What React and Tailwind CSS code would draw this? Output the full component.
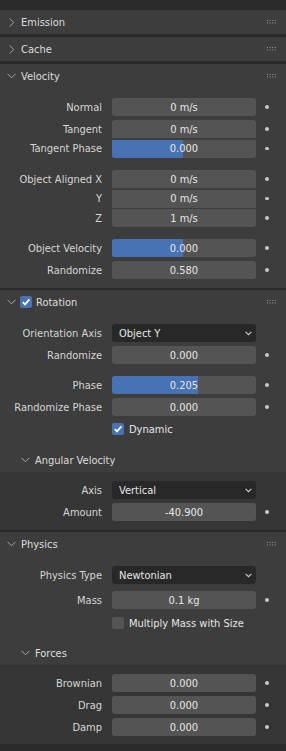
import React from "react";

const FONT = { fontFamily: '"DejaVu Sans Condensed", "DejaVu Sans", sans-serif' };

function Chevron({ open, className = "" }) {
  return open ? (
    <svg width="9" height="6" viewBox="0 0 9 6" className={className}>
      <polyline points="0.5,0.8 4.5,4.8 8.5,0.8" fill="none" stroke="#a8a8a8" strokeWidth="1" />
    </svg>
  ) : (
    <svg width="6" height="9" viewBox="0 0 6 9" className={className}>
      <polyline points="0.8,0.5 4.8,4.5 0.8,8.5" fill="none" stroke="#a8a8a8" strokeWidth="1" />
    </svg>
  );
}

function Grip() {
  const dots = [];
  for (let r = 0; r < 2; r++)
    for (let c = 0; c < 4; c++)
      dots.push(<rect key={r + "-" + c} x={c * 2.6} y={r * 2.4} width="1" height="1" fill="#9a9a9a" />);
  return (
    <svg width="10" height="4" viewBox="0 0 10 4" className="absolute right-[9px] top-1/2 -translate-y-1/2">
      {dots}
    </svg>
  );
}

function Check({ on, className = "" }) {
  return (
    <div
      className={
        "w-[12px] h-[12px] rounded-[2px] flex items-center justify-center " +
        (on ? "bg-[#4772b3]" : "bg-[#545454]") +
        " " +
        className
      }
    >
      {on && (
        <svg width="10" height="10" viewBox="0 0 10 10">
          <polyline points="1.8,5.2 4,7.4 8.4,2.4" fill="none" stroke="#ffffff" strokeWidth="1.7" />
        </svg>
      )}
    </div>
  );
}

function Header({ title, open, checkbox, className = "" }) {
  return (
    <div className={"relative h-[24px] bg-[#3d3d3d] flex items-center text-[#dedede] " + className}>
      <div className="w-[21px] flex justify-center pl-[2px]">
        <Chevron open={open} />
      </div>
      {checkbox && <Check on className="-ml-[1px] mr-[4px]" />}
      <span className="text-[11px] leading-none pt-[1px]">{title}</span>
      <Grip />
    </div>
  );
}

function SubHeader({ title }) {
  return (
    <div className="h-[24px] flex items-center text-[#dedede]">
      <div className="w-[35px] flex justify-end pr-[5px]">
        <Chevron open />
      </div>
      <span className="text-[11px] leading-none pt-[1px]">{title}</span>
    </div>
  );
}

function Dot() {
  return <div className="w-[3.5px] h-[3.5px] rounded-full bg-[#c8c8c8] ml-[9px]" />;
}

function Row({ label, children, dot = true, className = "" }) {
  return (
    <div className={"flex items-center h-[18px] " + className}>
      <div className="w-[102px] text-right text-[11px] leading-none text-[#d6d6d6] whitespace-nowrap">{label}</div>
      <div className="ml-[10px] w-[144px] h-full">{children}</div>
      {dot && <Dot />}
    </div>
  );
}

function Field({ value, fill, round = "rounded-[3px]" }) {
  return (
    <div className={"relative w-full h-full bg-[#545454] overflow-hidden " + round}>
      {fill != null && (
        <div className="absolute left-0 top-0 h-full bg-[#4772b3]" style={{ width: fill + "px" }} />
      )}
      <div className="relative h-full flex items-center justify-center text-[11px] leading-none text-[#e6e6e6]">
        {value}
      </div>
    </div>
  );
}

function Dropdown({ value }) {
  return (
    <div className="w-full h-full bg-[#282828] rounded-[3px] flex items-center justify-between pl-[7px] pr-[4px] text-[11px] leading-none text-[#e6e6e6]">
      <span>{value}</span>
      <svg width="7" height="5" viewBox="0 0 7 5">
        <polyline points="0.6,0.8 3.5,3.7 6.4,0.8" fill="none" stroke="#d0d0d0" strokeWidth="1.1" />
      </svg>
    </div>
  );
}

function CheckRow({ label, on, className = "" }) {
  return (
    <div className={"flex items-center h-[18px] " + className}>
      <div className="w-[112px]" />
      <Check on={on} />
      <span className="ml-[5px] text-[11px] leading-none text-[#e6e6e6]">{label}</span>
    </div>
  );
}

export default function App() {
  return (
    <div className="w-[286px] h-[751px] overflow-hidden bg-[#2b2b2b] pt-[10px]" style={FONT}>
      <Header title="Emission" />
      <Header title="Cache" className="mt-[3px]" />
      <Header title="Velocity" open className="mt-[3px]" />
      <div className="bg-[#3d3d3d] pt-[10px] pb-[9px]">
        <Row label="Normal">
          <Field value="0 m/s" />
        </Row>
        <Row label="Tangent" className="mt-[4px]">
          <Field value="0 m/s" round="rounded-t-[3px]" />
        </Row>
        <Row label="Tangent Phase" className="mt-[1.5px]">
          <Field value="0.000" fill={71} round="rounded-b-[3px]" />
        </Row>
        <Row label="Object Aligned X" className="mt-[12.5px]">
          <Field value="0 m/s" round="rounded-t-[3px]" />
        </Row>
        <Row label="Y" className="mt-[1.5px]">
          <Field value="0 m/s" round="rounded-none" />
        </Row>
        <Row label="Z" className="mt-[1.5px]">
          <Field value="1 m/s" round="rounded-b-[3px]" />
        </Row>
        <Row label="Object Velocity" className="mt-[12px]">
          <Field value="0.000" fill={71} />
        </Row>
        <Row label="Randomize" className="mt-[4px]">
          <Field value="0.580" />
        </Row>
      </div>
      <Header title="Rotation" open checkbox className="mt-[2px]" />
      <div className="bg-[#3d3d3d] pt-[10px]">
        <Row label="Orientation Axis" dot={false}>
          <Dropdown value="Object Y" />
        </Row>
        <Row label="Randomize" className="mt-[4px]">
          <Field value="0.000" />
        </Row>
        <Row label="Phase" className="mt-[12px]">
          <Field value="0.205" fill={86} />
        </Row>
        <Row label="Randomize Phase" className="mt-[4px]">
          <Field value="0.000" />
        </Row>
        <CheckRow label="Dynamic" on className="mt-[4px]" />
        <div className="h-[10px]" />
        <SubHeader title="Angular Velocity" />
        <div className="bg-[#363636] pt-[9px] pb-[9px]">
          <Row label="Axis" dot={false}>
            <Dropdown value="Vertical" />
          </Row>
          <Row label="Amount" className="mt-[4px]">
            <Field value="-40.900" />
          </Row>
        </div>
      </div>
      <Header title="Physics" open className="mt-[2px]" />
      <div className="bg-[#3d3d3d] pt-[10px]">
        <Row label="Physics Type" dot={false}>
          <Dropdown value="Newtonian" />
        </Row>
        <Row label="Mass" className="mt-[7px]">
          <Field value="0.1 kg" />
        </Row>
        <CheckRow label="Multiply Mass with Size" className="mt-[5px]" />
        <div className="h-[9px]" />
        <SubHeader title="Forces" />
        <div className="bg-[#363636] pt-[9px] pb-[8px]">
          <Row label="Brownian">
            <Field value="0.000" />
          </Row>
          <Row label="Drag" className="mt-[4px]">
            <Field value="0.000" />
          </Row>
          <Row label="Damp" className="mt-[4px]">
            <Field value="0.000" />
          </Row>
        </div>
      </div>
    </div>
  );
}
